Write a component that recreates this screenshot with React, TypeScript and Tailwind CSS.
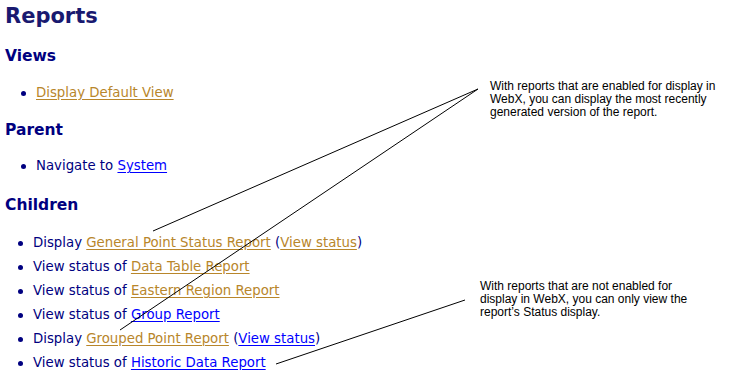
type Item = { pre: string; link: string; gold: boolean; status?: 'gold' | 'blue' };

const children: Item[] = [
  { pre: 'Display', link: 'General Point Status Report', gold: true, status: 'gold' },
  { pre: 'View status of', link: 'Data Table Report', gold: true },
  { pre: 'View status of', link: 'Eastern Region Report', gold: true },
  { pre: 'View status of', link: 'Group Report', gold: false },
  { pre: 'Display', link: 'Grouped Point Report', gold: true, status: 'blue' },
  { pre: 'View status of', link: 'Historic Data Report', gold: false },
];

const gold = 'text-[#b8862b] underline underline-offset-2';
const blue = 'text-[#0000ff] underline underline-offset-2';

function Li({ children, tight }: { children: React.ReactNode; tight?: boolean }) {
  return (
    <li className="flex items-center h-[24px]">
      <span className={'w-[5px] h-[5px] rounded-full bg-[#000080] mr-[10px] ' + (tight ? 'ml-[13px]' : 'ml-[16px]')} />
      <span>{children}</span>
    </li>
  );
}

export default function App() {
  return (
    <div className="relative w-[730px] h-[376px] overflow-hidden bg-white pl-[5px] text-[#000080] text-[13.3px] font-['Verdana','DejaVu_Sans',sans-serif]">
      <h1 className="pt-[3px] text-[21px] leading-[26px] font-bold text-[#191970]">Reports</h1>

      <h2 className="mt-[16px] text-[15.5px] leading-[22px] font-bold">Views</h2>
      <ul className="mt-[14px]">
        <Li><a className={gold}>Display Default View</a></Li>
      </ul>

      <h2 className="mt-[14px] text-[15.5px] leading-[22px] font-bold">Parent</h2>
      <ul className="mt-[13px]">
        <Li>Navigate to <a className={blue}>System</a></Li>
      </ul>

      <h2 className="mt-[16px] text-[15.5px] leading-[22px] font-bold">Children</h2>
      <ul className="mt-[15px]">
        {children.map((c, i) => (
          <Li key={i} tight>
            {c.pre} <a className={c.gold ? gold : blue}>{c.link}</a>
            {c.status && (
              <>
                {' '}(<a className={c.status === 'gold' ? gold : blue}>View status</a>)
              </>
            )}
          </Li>
        ))}
      </ul>

      {/* callout leader lines */}
      <svg className="absolute inset-0 pointer-events-none" width="730" height="376">
        <line x1="478" y1="89" x2="153" y2="231" stroke="#000" strokeWidth="1" />
        <line x1="478" y1="89" x2="120" y2="330" stroke="#000" strokeWidth="1" />
        <line x1="465" y1="300" x2="276" y2="364" stroke="#000" strokeWidth="1" />
      </svg>

      <p className="absolute left-[490px] top-[80px] w-[235px] text-black text-[12px] leading-[13px] font-['Liberation_Sans',Arial,sans-serif]">
        With reports that are enabled for display in WebX, you can display the most recently generated version of the report.
      </p>
      <p className="absolute left-[480px] top-[280px] w-[222px] text-black text-[12px] leading-[13px] font-['Liberation_Sans',Arial,sans-serif]">
        With reports that are not enabled for display in WebX, you can only view the report’s Status display.
      </p>
    </div>
  );
}
